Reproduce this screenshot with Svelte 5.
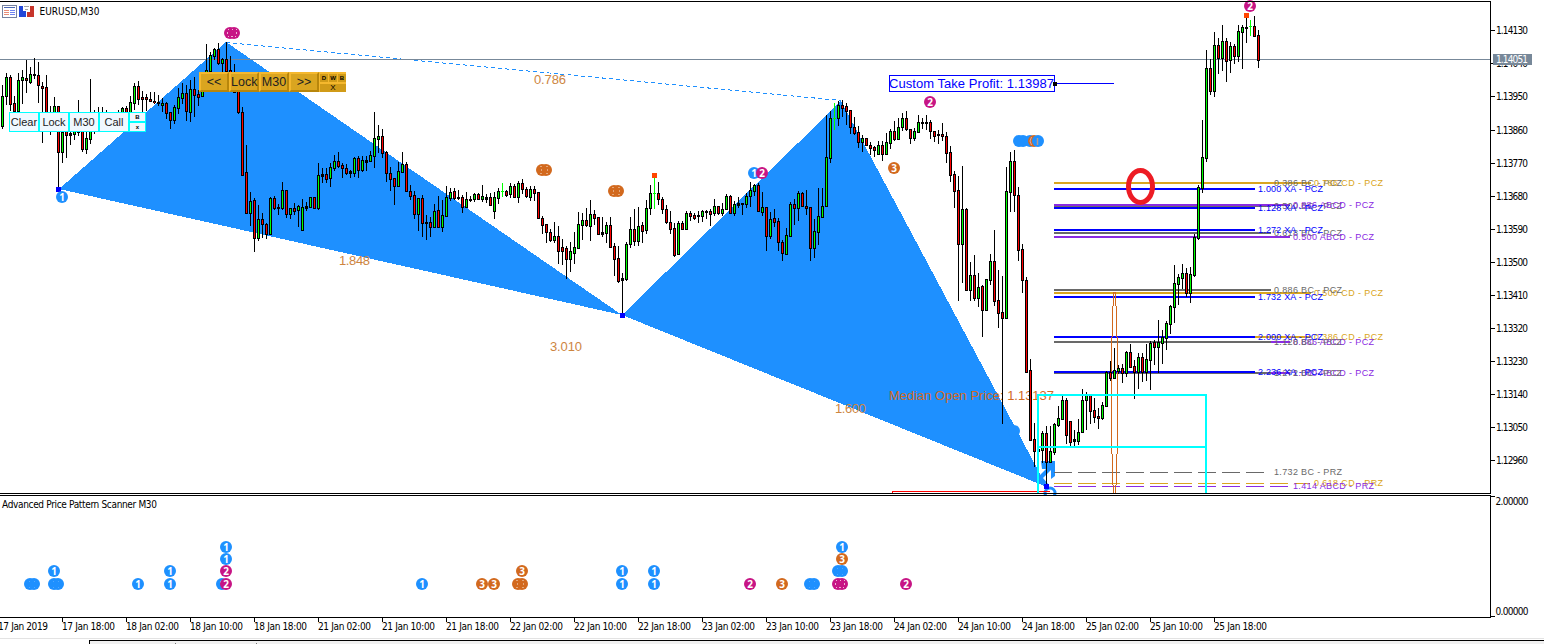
<script>
    // kind (g up, r down, d doji, l highlighted), high, body top, body bottom, low
    const series = `g 85 96 126 129;g 73 77 96 105;r 75 77 104 111;r 96 103 111 113;g 73 80 111 113;g 70 77 80 104;r 60 78 80 93;g 67 74 82 84;d 58 74 75 79;r 62 75 85 103
r 82 86 88 143;r 75 87 113 114;r 106 112 125 135;g 97 106 125 127;r 106 106 152 189;g 117 132 152 163;r 120 126 135 158;d 120 133 135 145;g 112 131 134 140;r 100 112 132 136
r 112 130 149 152;g 130 138 149 154;g 79 125 139 144;g 110 115 126 134;d 107 118 120 124;g 107 112 118 124;r 110 114 120 124;g 113 116 120 124;d 112 118 120 124;g 110 113 118 122
g 107 108 120 122;r 106 108 114 120;g 96 102 112 118;g 83 86 103 110;r 81 86 99 105;r 91 97 99 112;r 94 97 99 111;r 92 99 101 102;r 92 101 102 104;d 95 102 103 106
g 98 103 105 112;r 102 103 113 119;r 112 112 120 129;g 105 107 120 124;g 88 97 108 114;g 83 93 98 104;r 85 93 111 121;g 80 89 112 122;r 77 89 95 117;r 90 94 97 106
g 85 89 96 97;g 44 70 90 91;g 52 55 71 72;g 48 49 56 60;r 43 49 63 65;g 58 59 63 72;r 42 59 71 72;r 56 70 80 85;r 64 72 92 93;r 80 91 112 114
r 107 112 175 176;r 145 172 213 214;g 192 201 213 226;r 198 200 238 252;g 205 219 238 241;r 213 219 224 238;r 223 224 234 239;g 197 198 234 235;r 196 198 208 210;d 204 207 208 215
g 182 190 208 210;r 190 190 214 218;g 208 208 214 219;r 203 208 211 215;g 205 206 210 227;g 199 207 230 231;d 202 206 208 211;g 197 197 207 208;r 197 197 208 209;g 163 175 208 210
d 168 174 176 183;r 168 174 179 183;g 163 167 178 187;g 155 161 168 171;r 152 161 166 168;r 163 165 168 178;r 164 168 173 175;d 170 171 173 178;g 157 158 173 177;r 156 158 170 178
g 156 160 170 172;d 156 160 162 171;g 151 155 161 162;g 112 138 156 168;g 125 136 139 153;r 129 136 153 158;r 151 152 173 182;r 167 173 179 191;r 178 178 186 205;g 162 171 186 187
g 152 164 172 172;r 162 164 191 191;r 185 191 196 200;r 191 195 214 219;g 198 198 214 231;r 195 198 223 237;d 215 222 223 240;r 217 222 227 237;g 204 211 227 227;r 196 210 227 227
g 200 215 227 232;g 186 197 216 216;g 188 192 198 201;r 188 191 198 200;d 190 197 198 200;r 195 197 207 213;g 192 199 207 208;d 196 199 200 202;g 193 194 199 202;r 193 194 199 199
g 185 196 199 202;d 194 197 199 203;r 193 197 205 206;g 192 197 211 219;g 188 191 198 204;l 183 191 191 197;r 190 191 195 197;g 183 186 194 198;r 184 186 197 198;g 181 183 197 203
r 179 183 189 194;r 187 189 196 198;g 186 189 197 201;r 186 189 193 201;r 192 192 218 219;r 216 218 225 234;r 224 224 232 243;r 229 232 240 242;g 222 236 240 243;r 226 236 251 264
r 239 247 251 265;r 246 248 259 279;g 242 251 259 272;g 232 247 253 264;g 212 224 248 249;g 213 220 225 240;r 208 220 225 227;g 200 214 226 241;r 210 214 218 225;r 217 217 234 235
d 217 232 234 237;g 222 225 233 243;r 217 225 247 248;r 243 246 259 276;r 246 258 281 283;d 273 278 280 315;g 242 244 279 281;g 217 229 244 248;r 209 229 241 246;g 207 226 241 246
r 222 225 231 243;g 200 208 230 234;g 185 193 208 215;l 178 193 193 209;r 182 193 199 205;r 197 199 209 214;r 205 209 222 224;r 211 222 229 234;r 223 228 255 257;g 221 223 254 254
r 221 223 229 229;g 211 213 229 229;r 211 213 216 221;r 213 215 218 220;d 211 215 216 223;g 210 211 216 222;d 210 211 212 219;r 209 211 214 226;g 199 206 213 216;r 206 206 213 215
g 203 209 213 216;g 194 196 209 210;r 195 196 213 213;g 201 204 213 216;d 197 203 205 208;d 203 203 204 215;g 193 196 204 208;g 182 190 196 207;g 184 185 191 196;r 183 185 211 212
g 192 207 212 216;r 207 207 236 251;g 212 219 236 239;r 209 218 222 227;r 218 221 242 251;r 240 242 253 261;g 228 235 254 255;g 202 204 236 237;r 199 204 208 225;g 191 193 208 221
r 192 193 206 207;r 190 206 208 215;r 207 207 248 261;g 219 231 248 258;g 188 216 232 245;g 188 206 217 217;g 115 157 206 207;g 111 118 158 163;l 103 118 118 130;g 101 105 118 126
r 100 105 108 117;r 103 106 111 125;r 110 110 127 134;r 117 127 133 135;r 126 132 142 148;g 135 138 142 152;r 138 138 145 146;r 142 145 148 155;r 146 147 150 157;g 141 145 154 154
r 141 145 154 161;g 133 142 154 154;g 129 131 143 149;r 121 131 139 141;g 118 127 139 139;g 113 118 127 131;r 111 118 129 131;r 129 129 138 144;g 128 131 138 141;g 115 122 132 133
d 118 122 123 129;d 115 122 123 130;r 120 122 131 139;r 131 131 136 142;d 130 134 135 144;r 123 134 136 141;r 132 136 153 163;r 146 152 175 182;r 171 174 191 208;r 176 190 244 301
g 166 209 244 283;r 208 209 290 291;g 262 275 290 301;r 255 275 298 301;g 273 287 298 307;r 285 286 310 337;g 279 279 310 310;g 254 261 280 285;r 230 261 301 306;r 270 300 313 328
r 276 312 318 424;g 167 191 318 318;g 152 161 192 212;r 150 161 195 212;r 187 195 250 261;r 244 249 280 293;r 277 280 372 373;r 359 370 440 441;r 423 439 451 467;d 448 449 451 452
g 431 433 450 463;r 426 433 462 485;g 426 451 462 462;g 423 424 452 455;g 406 418 425 427;g 396 400 419 420;r 398 400 435 444;r 421 421 442 446;d 430 439 441 447;g 419 432 441 445
g 389 400 432 432;g 392 394 400 430;r 395 395 411 424;r 398 410 417 423;r 408 416 418 429;g 402 405 418 420;g 371 372 406 406;r 361 372 378 381;g 348 370 378 378;g 365 368 371 374
r 364 368 373 383;g 351 352 373 377;r 344 352 367 368;r 360 366 372 399;g 353 357 372 389;r 353 357 372 382;g 344 359 372 381;g 341 343 360 390;r 340 342 347 365;g 320 342 347 373
g 330 337 343 364;g 321 323 338 350;g 305 306 324 334;g 265 283 307 323;g 274 277 284 305;g 264 273 278 289;r 268 273 293 297;g 267 274 293 303;g 234 237 275 277;g 185 187 238 240
g 120 157 188 193;g 50 68 158 162;r 59 68 91 95;g 32 45 91 97;r 38 45 58 74;g 25 41 58 71;r 38 41 61 82;g 42 46 60 73;r 44 46 56 64;g 25 31 56 62
g 25 27 32 69;d 18 27 28 43;l 20 26 26 36;r 16 26 36 37;r 30 35 60 68`;

    const candles = series.split(/[;\n]/).map((row, i) => {
        const [kind, high, top, bottom, low] = row.trim().split(' ');
        return { x: 2 + i * 4, kind, high: +high, top: +top, bottom: +bottom, low: +low };
    });

    const blue = '#0000ff', gray = '#696969', gold = '#daa520', violet = '#8a2be2';
    const reach = { XA: 1255, BC: 1271, ABCD: 1290, CD: 1311 };
    const colors = { XA: blue, BC: gray, ABCD: violet, CD: gold };
    const widths = { XA: 65, BC: 68, ABCD: 81, CD: 69 };

    const levels = [
        [183, '0.386', 'BC'], [183, '0.786', 'CD'], [189, '1.000', 'XA'],
        [206, '0.500', 'BC'], [205, '0.886', 'ABCD'], [208, '1.128', 'XA'],
        [233, '0.618', 'BC'], [237, '0.500', 'ABCD'], [230, '1.272', 'XA'],
        [293, '0.500', 'CD'], [290, '0.886', 'BC'], [297, '1.732', 'XA'],
        [337, '0.386', 'CD'], [342, '0.886', 'ABCD'], [342, '1.128', 'BC'], [337, '2.000', 'XA'],
        [373, '1.000', 'ABCD'], [373, '1.272', 'BC'], [372, '2.236', 'XA']
    ];
    const reversal = [[472, '1.732', 'BC', 1264], [483, '0.618', 'CD', 1310], [486, '1.414', 'ABCD', 1288]];

    const fill = { 1: '#1e90ff', 2: '#c71585', 3: '#d2691e' };
    // x, y, pattern number, second badge on the next bar
    const badges = [
        [230, 33, 2, 1], [62, 197, 1], [542, 170, 3, 1], [614, 191, 3, 1], [754, 173, 1], [762, 173, 2],
        [930, 102, 2], [894, 168, 3], [1250, 6, 2]
    ];
    const signals = [
        [30, 584, 1, 1], [54, 571, 1], [54, 584, 1, 1], [138, 584, 1], [170, 571, 1], [170, 584, 1],
        [226, 547, 1], [226, 559, 1], [226, 571, 2], [222, 584, 1], [226, 584, 2], [422, 584, 1],
        [482, 584, 3], [494, 584, 3], [522, 571, 3], [518, 584, 3, 1], [622, 571, 1], [622, 584, 1],
        [654, 571, 1], [654, 584, 1], [750, 584, 2], [782, 584, 3], [810, 584, 1, 1],
        [842, 547, 1], [842, 559, 3], [838, 571, 1, 1], [838, 584, 2, 1], [906, 584, 2]
    ];

    const prices = ['1.14130', '1.14040', '1.13950', '1.13860', '1.13770', '1.13680', '1.13590', '1.13500', '1.13410', '1.13320', '1.13230', '1.13140', '1.13050', '1.12960'];
    const priceY = [30, 63, 96, 130, 163, 196, 229, 262, 295, 328, 361, 394, 427, 460];

    const times = ['17 Jan 18:00'];
    for (const day of [18, 21, 22, 23, 24, 25]) {
        for (const hour of ['02', '10', '18']) times.push(`${day} Jan ${hour}:00`);
    }
</script>

{#snippet badge([x, y, n, double])}
    {#if double}
        <circle cx={x} cy={y} r="6" fill={fill[n]} />
        <circle cx={x + 4} cy={y} r="6" fill={fill[n]} />
        {#if n === 1}
            <path d="M{x - 1} {y - 2.5}h1m4 0h1M{x - 1} {y + 3.5}h1m4 0h1" stroke="#4da6ff" />
        {:else if n === 2}
            <path d="M{x - 2} {y - 3.5}h1m3 0h1m3 0h1M{x - 2} {y + 3.5}h1m2 0h2m2 0h1M{x - 2.5} {y - 1}v2m9 -2v2" stroke="#efb5d6" fill="none" />
        {:else}
            <path d="M{x - 2} {y - 3.5}h2m4 0h2M{x - 2} {y + 3.5}h2m4 0h2M{x - 0.5} {y - 1}v2m6 -2v2" stroke="#e5a87b" fill="none" />
        {/if}
    {:else}
        <circle cx={x} cy={y} r="6" fill={fill[n]} />
        <text class="digit" {x} y={y + 4}>{n}</text>
    {/if}
{/snippet}

<div class="terminal">
    <div class="main">
        <svg class="chart" width="1491" height="496" viewBox="0 0 1491 496">
            <g class="crisp">
                <polygon points="226,42 59,189 622,315" fill="#1e90ff" />
                <polygon points="622,315 841,101 1047,487" fill="#1e90ff" />
                <path d="M226 42.5L841 100.5" stroke="#1e90ff" stroke-dasharray="4 3" />
                <path d="M0 59.5H1491" stroke="#778899" />
            </g>
            <circle cx="1014" cy="431" r="6" fill="#1e90ff" />
            <circle cx="1050" cy="493" r="5" fill="none" stroke="#1e90ff" stroke-width="3" />
            <path d="M1041 461h14v15l-4 3v-9l-8 8 6 7-9-3v-7l6-6h-4z" fill="#1e90ff" />

            <g class="ratio">
                <text x="534" y="84" textLength="32">0.786</text>
                <text x="339" y="265" textLength="31">1.848</text>
                <text x="550" y="351" textLength="32">3.010</text>
                <text x="835" y="413" textLength="31">1.600</text>
                <text class="median" x="889" y="400" textLength="165">Median Open Price: 1.13137</text>
            </g>

            <g class="crisp" fill="none">
                {#each levels as [y, , leg]}
                    <path d="M1054 {y}H{reach[leg]}" stroke={colors[leg]} stroke-width="2" />
                {/each}
                {#each reversal as [y, , leg, end]}
                    <path d="M1054 {y + 0.5}H{end}" stroke={colors[leg]} stroke-dasharray="18 6" />
                {/each}
                <path d="M1113.5 306V292H1115.5V306M1112.5 337V306M1116.5 337V306M1111.5 454V337M1117.5 454V337M1112.5 485V454M1116.5 485V454M1113.5 493V485M1115.5 493V485" stroke="#d2691e" />
                <path d="M892.5 493V491.5H1050" stroke="#ff0000" />
            </g>

            <g class="crisp">
                {#each candles as c}
                    {#if c.kind === 'l'}
                        <rect x={c.x} y={c.high} width="1" height={c.low - c.high} fill="#00ff00" />
                        <rect x={c.x - 1} y={c.top} width="3" height="1" fill="#00ff00" />
                    {:else}
                        <rect x={c.x} y={c.high} width="1" height={c.low - c.high} />
                        <rect x={c.x - 1} y={c.top} width="3" height={c.bottom - c.top + 1} />
                        {#if c.kind !== 'd'}
                            <rect x={c.x} y={c.top + 1} width="1" height={Math.max(1, c.bottom - c.top - 1)} fill={c.kind === 'g' ? '#00ff00' : '#ff0000'} />
                        {/if}
                    {/if}
                {/each}
                <path d="M1038 493V395H1206V493M1038 447H1206" fill="none" stroke="#00ffff" stroke-width="2" />
                <path d="M56 187h5v5h-5zM620 313h5v5h-5zM1044 484h5v5h-5z" fill="#0000ff" />
                <path d="M652 173h5v5h-5zM1244 13h5v5h-5z" fill="#ff4500" />
            </g>

            <g class="level">
                {#each [...levels, ...reversal] as [y, ratio, leg], i}
                    <text x={reach[leg] + 3} y={y + 3} fill={colors[leg]} textLength={widths[leg]}>{ratio} {leg} - {i < levels.length ? 'PCZ' : 'PRZ'}</text>
                {/each}
            </g>

            <ellipse cx="1140.5" cy="186.5" rx="12" ry="16" fill="none" stroke="#ed1c24" stroke-width="5" />

            {#each badges as b}
                {@render badge(b)}
            {/each}
            <g fill="#1e90ff">
                <circle cx="1019" cy="141" r="6" />
                <circle cx="1023" cy="141" r="6" />
                <circle cx="1030" cy="141" r="6" />
                <circle cx="1034" cy="141" r="6" fill="#d2691e" />
                <circle cx="1038" cy="141" r="6" />
            </g>
            <path d="M1031.5 137q-3 4 0 8" fill="none" stroke="#d9a7b0" />
            <path d="M1037.5 138v7" stroke="#b89a8d" stroke-width="1.5" />

            <rect class="crisp" x="889.5" y="75.5" width="165" height="16" fill="none" stroke="#0000ff" />
            <text class="profit" x="889" y="88" textLength="165">Custom Take Profit: 1.13987</text>
            <path class="crisp" d="M1057 83.5H1114" stroke="#0000ff" />
            <rect class="crisp" x="1053" y="82" width="4" height="4" />

            <g class="crisp">
                <path d="M0 1.5H1490.5V493.5H0M0 495.5H1491" fill="none" stroke="#000" />
                <rect x="2.5" y="5.5" width="14" height="12" rx="1" fill="#fff" stroke="#77829f" />
                <path d="M4 7.5H15" stroke="#4c68b5" />
                <path d="M4 10.5h5M4 12.5h5M4 14.5h5" stroke="#e88d78" />
                <path d="M10 10.5h5M10 12.5h5M10 14.5h5" stroke="#7084f0" />
                <path d="M19 6h4v5h3v6h-7z" fill="#2448d8" />
                <path d="M30 6h4v11h-7v-5h3z" fill="#c7352b" />
                <path d="M24 6.5h5M25 9.5h3" stroke="#a5a5a5" />
            </g>
            <text class="ui" x="39.5" y="15" textLength="60">EURUSD,M30</text>
        </svg>

        <svg class="scale" width="53" height="496" viewBox="1491 0 53 496">
            {#each prices as price, i}
                <path class="crisp" d="M1491 {priceY[i] + 0.5}h4" stroke="#000" />
                <text class="ui" x="1496" y={priceY[i] + 4} textLength="32">{price}</text>
            {/each}
            <rect x="1493" y="54" width="39" height="11" fill="#778899" />
            <text class="ui" x="1496" y="63" textLength="32" fill="#fff">1.14051</text>
        </svg>

        <div class="panel gold">
            <button>&lt;&lt;</button><button>Lock</button><button>M30</button><button>&gt;&gt;</button>
            <div class="mini">
                <div class="trio"><i>D</i><i>W</i><i>B</i></div>
                <i>X</i>
            </div>
        </div>

        <div class="panel aqua">
            <button>Clear</button><button>Lock</button><button>M30</button><button>Call</button>
            <div class="mini"><i>B</i><i>x</i></div>
        </div>
    </div>

    <div class="scanner">
        <svg width="1491" height="122" viewBox="0 496 1491 122">
            <text class="ui" x="2" y="508" textLength="155">Advanced Price Pattern Scanner M30</text>
            {#each signals as s}
                {@render badge(s)}
            {/each}
            <path class="crisp" d="M1490.5 496V617.5H0" fill="none" stroke="#000" />
        </svg>
        <svg width="53" height="122" viewBox="1491 496 53 122">
            <path class="crisp" d="M1491 496.5h4M1491 616.5h4" stroke="#000" />
            <text class="ui" x="1495.5" y="504.5" textLength="33">2.00000</text>
            <text class="ui" x="1495.5" y="615" textLength="33">0.00000</text>
        </svg>
    </div>

    <svg class="times" width="1544" height="20" viewBox="0 618 1544 20">
        <text class="ui" x="-2" y="630" textLength="50">17 Jan 2019</text>
        {#each times as time, i}
            <path class="crisp" d="M{62.5 + i * 64} 618v4" stroke="#000" />
            <text class="ui" x={62 + i * 64} y="630" textLength="53">{time}</text>
        {/each}
    </svg>
    <div class="status"><div class="tabs"><span></span><span></span></div></div>
</div>

<style>
    :global(body) {
        margin: 0;
        overflow: hidden;
        background: #fff;
    }

    .terminal {
        width: 1544px;
        height: 644px;
        background: #fff;
        overflow: hidden;
    }

    .main,
    .scanner {
        display: flex;
        position: relative;
    }

    svg {
        display: block;
        flex: none;
    }

    .crisp {
        shape-rendering: crispEdges;
    }

    .ui {
        font: 10px "DejaVu Sans Condensed", "DejaVu Sans", sans-serif;
    }

    .ratio text,
    .profit {
        font: 13px "Liberation Sans", Arial, sans-serif;
        fill: #cd853f;
    }

    .ratio .median {
        fill: #d2691e;
    }

    .profit {
        fill: #0000ff;
    }

    .level {
        font: 9px "Liberation Sans", Arial, sans-serif;
    }

    .digit {
        font: bold 10px "Noto Sans", "DejaVu Sans", sans-serif;
        fill: #fff;
        text-anchor: middle;
    }

    .panel {
        position: absolute;
        display: flex;
        box-sizing: border-box;
        height: 20px;
        font-family: "Liberation Sans", Arial, sans-serif;
    }

    .panel button {
        box-sizing: border-box;
        width: 30px;
        height: 20px;
        padding: 0;
        font: inherit;
        line-height: 16px;
        white-space: nowrap;
        color: #222;
    }

    .panel i {
        display: block;
        font-style: normal;
        text-align: center;
    }

    .gold {
        left: 199px;
        top: 72px;
        width: 147px;
        background: #f5b82e;
        font-size: 12.5px;
    }

    .gold button {
        border: 2px solid;
        border-color: #f5b82e #b8860b #b8860b #f5b82e;
        background: #daa520;
    }

    .gold .mini {
        display: grid;
        grid-template-rows: 8px 8px;
        gap: 2px;
        padding-top: 2px;
        width: 27px;
        background: #f5b82e;
    }

    .gold .mini i {
        margin-left: 1px;
        background: #d19b18;
        font-size: 8px;
        line-height: 8px;
    }

    .gold .trio {
        display: grid;
        grid-template-columns: repeat(3, 1fr);
    }

    .gold .trio i {
        font-size: 6px;
        font-weight: bold;
    }

    .aqua {
        left: 9px;
        top: 112px;
        width: 137px;
        background: #00ffff;
        font-size: 11px;
    }

    .aqua button {
        border: 1px solid #00ffff;
        background: #f0f8ff;
        line-height: 18px;
    }

    .aqua .mini {
        display: grid;
        grid-template-rows: 8px 8px;
        gap: 2px;
        padding: 1px;
        width: 15px;
    }

    .aqua .mini i {
        background: #f0f8ff;
        font-size: 6px;
        font-weight: bold;
        line-height: 8px;
    }

    .status {
        box-sizing: border-box;
        height: 6px;
        padding: 1px 0 0 89px;
        border-top: 1px solid #e3e3e3;
    }

    .tabs {
        display: flex;
        gap: 80px;
        box-sizing: border-box;
        height: 4px;
        padding: 2px 0 0 85px;
        border-top: 1px solid #000;
        border-left: 1px solid #000;
        background: #f0f0f0;
    }

    .tabs span {
        width: 1px;
        height: 1px;
        background: #777;
    }
</style>
